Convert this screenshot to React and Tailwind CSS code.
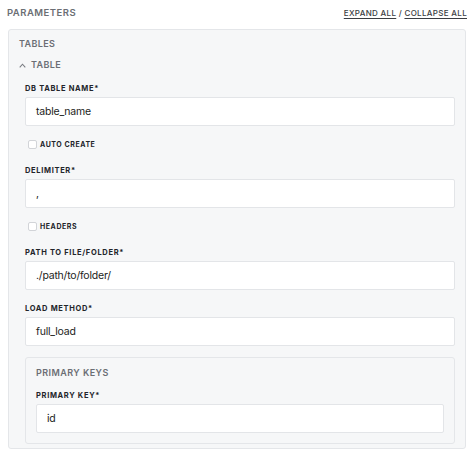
import { useState } from "react";

const font = { fontFamily: "Inter, 'Liberation Sans', sans-serif" };

function Label({ children }) {
  return (
    <div className="text-[7.5px] leading-[10px] pt-[1px] font-bold tracking-[0.09em] text-[#22252a] mb-[3px]">
      {children}
    </div>
  );
}

function Input({ value }) {
  return (
    <div className="h-[29px] bg-white border border-[#e3e5e8] rounded-[2px] flex items-center pl-[10px] text-[10.5px] tracking-[-0.02em] text-[#1b1d21]">
      {value}
    </div>
  );
}

function Check({ label }) {
  return (
    <div className="flex items-center gap-[3px] h-[10px] pl-[3px]">
      <span className="w-[9px] h-[9px] rounded-[2px] border border-[#d2d4d8] bg-white shrink-0" />
      <span className="text-[7px] leading-[10px] font-bold tracking-[0.08em] text-[#22252a] pt-[2px]">{label}</span>
    </div>
  );
}

export default function App() {
  const [open, setOpen] = useState(true);

  return (
    <div className="w-[474px] h-[449px] bg-white overflow-hidden" style={font}>
      {/* header */}
      <div className="flex items-center justify-between h-[26px] pl-[7px] pr-[7px]">
        <span className="text-[9.5px] font-semibold tracking-[0.05em] text-[#6b6e74]">PARAMETERS</span>
        <span className="text-[8px] font-medium tracking-[0.04em] text-[#3a3d42]">
          <a className="underline underline-offset-2">EXPAND ALL</a>
          <span> / </span>
          <a className="underline underline-offset-2">COLLAPSE ALL</a>
        </span>
      </div>

      {/* tables panel */}
      <div className="mx-[8px] mt-[3px] bg-[#f6f7f8] border border-[#e4e6e9] rounded-[3px] pl-[10px] pr-[10px] pt-[7px] pb-[4px]">
        <div className="text-[9px] leading-[14px] font-semibold tracking-[0.04em] text-[#6b6e74]">TABLES</div>

        <button
          onClick={() => setOpen(!open)}
          className="mt-[7px] flex items-center gap-[5px] h-[14px] text-[9px] font-semibold tracking-[0.04em] text-[#6b6e74]"
        >
          <svg width="7" height="5" viewBox="0 0 7 5" fill="none">
            <polyline points="0.7,4.3 3.5,1.2 6.3,4.3" stroke="#7a7d83" strokeWidth="1.1" />
          </svg>
          TABLE
        </button>

        {open && (
          <div className="ml-[6px] mt-[11px]">
            <Label>DB TABLE NAME*</Label>
            <Input value="table_name" />
            <div className="mt-[13px]">
              <Check label="AUTO CREATE" />
            </div>

            <div className="mt-[16px]">
              <Label>DELIMITER*</Label>
              <Input value="," />
            </div>
            <div className="mt-[13px]">
              <Check label="HEADERS" />
            </div>

            <div className="mt-[16px]">
              <Label>PATH TO FILE/FOLDER*</Label>
              <Input value="./path/to/folder/" />
            </div>

            <div className="mt-[13px]">
              <Label>LOAD METHOD*</Label>
              <Input value="full_load" />
            </div>

            {/* primary keys */}
            <div className="mt-[11px] bg-[#f6f7f8] border border-[#e4e6e9] rounded-[3px] px-[10px] pt-[8px] pb-[10px]">
              <div className="text-[9px] leading-[14px] font-semibold tracking-[0.05em] text-[#6b6e74]">PRIMARY KEYS</div>
              <div className="mt-[10px]">
                <Label>PRIMARY KEY*</Label>
                <Input value="id" />
              </div>
            </div>
          </div>
        )}
      </div>
    </div>
  );
}
